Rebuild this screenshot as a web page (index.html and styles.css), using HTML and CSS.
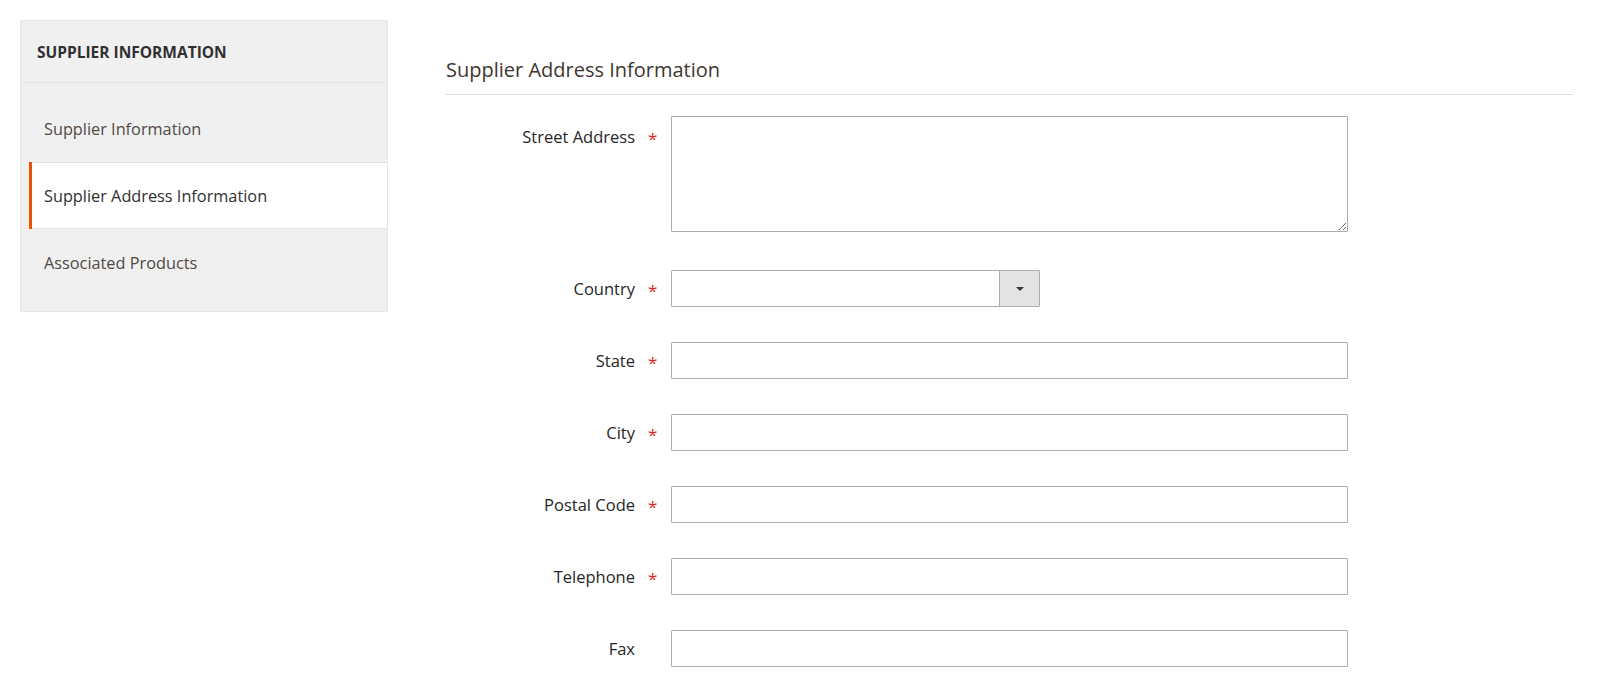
FILE: index.html
```html
<!DOCTYPE html>
<html lang="en">
<head>
<meta charset="utf-8">
<title>Supplier Address Information</title>
<link rel="stylesheet" href="styles.css">
</head>
<body>
<div class="page">
  <aside class="nav">
    <div class="nav-title">SUPPLIER INFORMATION</div>
    <ul class="nav-items">
      <li class="nav-item"><a class="nav-link">Supplier Information</a></li>
      <li class="nav-item active"><a class="nav-link">Supplier Address Information</a></li>
      <li class="nav-item"><a class="nav-link">Associated Products</a></li>
    </ul>
  </aside>
  <main class="main">
    <h2 class="section-title">Supplier Address Information</h2>
    <form class="form">
      <div class="field field-textarea">
        <label class="label label-top"><span>Street Address</span><span class="req">*</span></label>
        <textarea class="control textarea"></textarea>
      </div>
      <div class="field">
        <label class="label"><span>Country</span><span class="req">*</span></label>
        <div class="select">
          <span class="select-value"></span>
          <span class="select-btn"><svg width="8" height="4" viewBox="0 0 8 4"><path d="M0 0 H8 L4 4 Z" fill="#41362f"/></svg></span>
        </div>
      </div>
      <div class="field">
        <label class="label"><span>State</span><span class="req">*</span></label>
        <input class="control input" type="text">
      </div>
      <div class="field">
        <label class="label"><span>City</span><span class="req">*</span></label>
        <input class="control input" type="text">
      </div>
      <div class="field">
        <label class="label"><span>Postal Code</span><span class="req">*</span></label>
        <input class="control input" type="text">
      </div>
      <div class="field">
        <label class="label"><span>Telephone</span><span class="req">*</span></label>
        <input class="control input" type="text">
      </div>
      <div class="field">
        <label class="label"><span>Fax</span><span class="req hidden">*</span></label>
        <input class="control input" type="text">
      </div>
    </form>
  </main>
</div>
</body>
</html>
```

FILE: styles.css
```css
* { box-sizing: border-box; }
html, body { margin: 0; padding: 0; background: #fff; }
body {
  font-family: "Open Sans", "Liberation Sans", sans-serif;
  color: #303030;
  font-size: 16px;
  overflow: hidden;
}
.page {
  display: flex;
  align-items: flex-start;
  padding: 20px 27px 0 20px;
  gap: 57px;
}
.nav {
  flex: 0 0 368px;
  background: #f0f0f0;
  border: 1px solid #e6e6e6;
}
.nav-title {
  height: 62px;
  padding: 0 16px;
  display: flex;
  align-items: center;
  font-weight: 700;
  font-size: 15.5px;
  color: #303030;
  border-bottom: 1px solid #e3e3e3;
}
.nav-items {
  list-style: none;
  margin: 0;
  padding: 12px 0 15px 0;
}
.nav-item {
  margin-left: 8px;
  border-left: 3px solid transparent;
}
.nav-link {
  display: flex;
  align-items: center;
  height: 67px;
  padding: 0 12px;
  font-size: 16.3px;
  color: #514943;
  border-top: 1px solid transparent;
  border-bottom: 1px solid transparent;
}
.nav-item.active {
  border-left-color: #eb5202;
  background: #fff;
}
.nav-item.active .nav-link {
  color: #303030;
  border-top-color: #e3e3e3;
  border-bottom-color: #e3e3e3;
}
.main {
  flex: 1 1 auto;
}
.section-title {
  margin: 0;
  padding: 37px 0 11px 1px;
  font-size: 20px;
  line-height: 26px;
  font-weight: 400;
  color: #41362f;
  border-bottom: 1px solid #e2e0d8;
}
.form {
  padding-top: 21px;
}
.field {
  display: flex;
  align-items: flex-start;
  margin-bottom: 35px;
}
.field-textarea {
  margin-bottom: 38px;
}
.label {
  flex: 0 0 226px;
  display: flex;
  justify-content: flex-end;
  align-items: center;
  height: 37px;
  padding-right: 14px;
  font-size: 16.5px;
  font-weight: 400;
  color: #262626;
}
.label-top {
  height: 40px;
}
.req {
  color: #e22626;
  margin-left: 13px;
  width: 9px;
  font-size: 17px;
  font-weight: 400;
  line-height: 1;
  padding-top: 4px;
}
.req.hidden { visibility: hidden; }
.control {
  display: block;
  margin: 0;
  border: 1px solid #adadad;
  border-radius: 1px;
  background: #fff;
  font: inherit;
}
.input {
  width: 677px;
  height: 37px;
}
.textarea {
  width: 677px;
  height: 116px;
  resize: vertical;
}
.select {
  display: flex;
  width: 369px;
  height: 37px;
  border: 1px solid #adadad;
  border-radius: 1px;
  background: #fff;
}
.select-value { flex: 1 1 auto; }
.select-btn {
  flex: 0 0 40px;
  display: flex;
  align-items: center;
  justify-content: center;
  background: #e3e3e3;
  border-left: 1px solid #adadad;
}
```
